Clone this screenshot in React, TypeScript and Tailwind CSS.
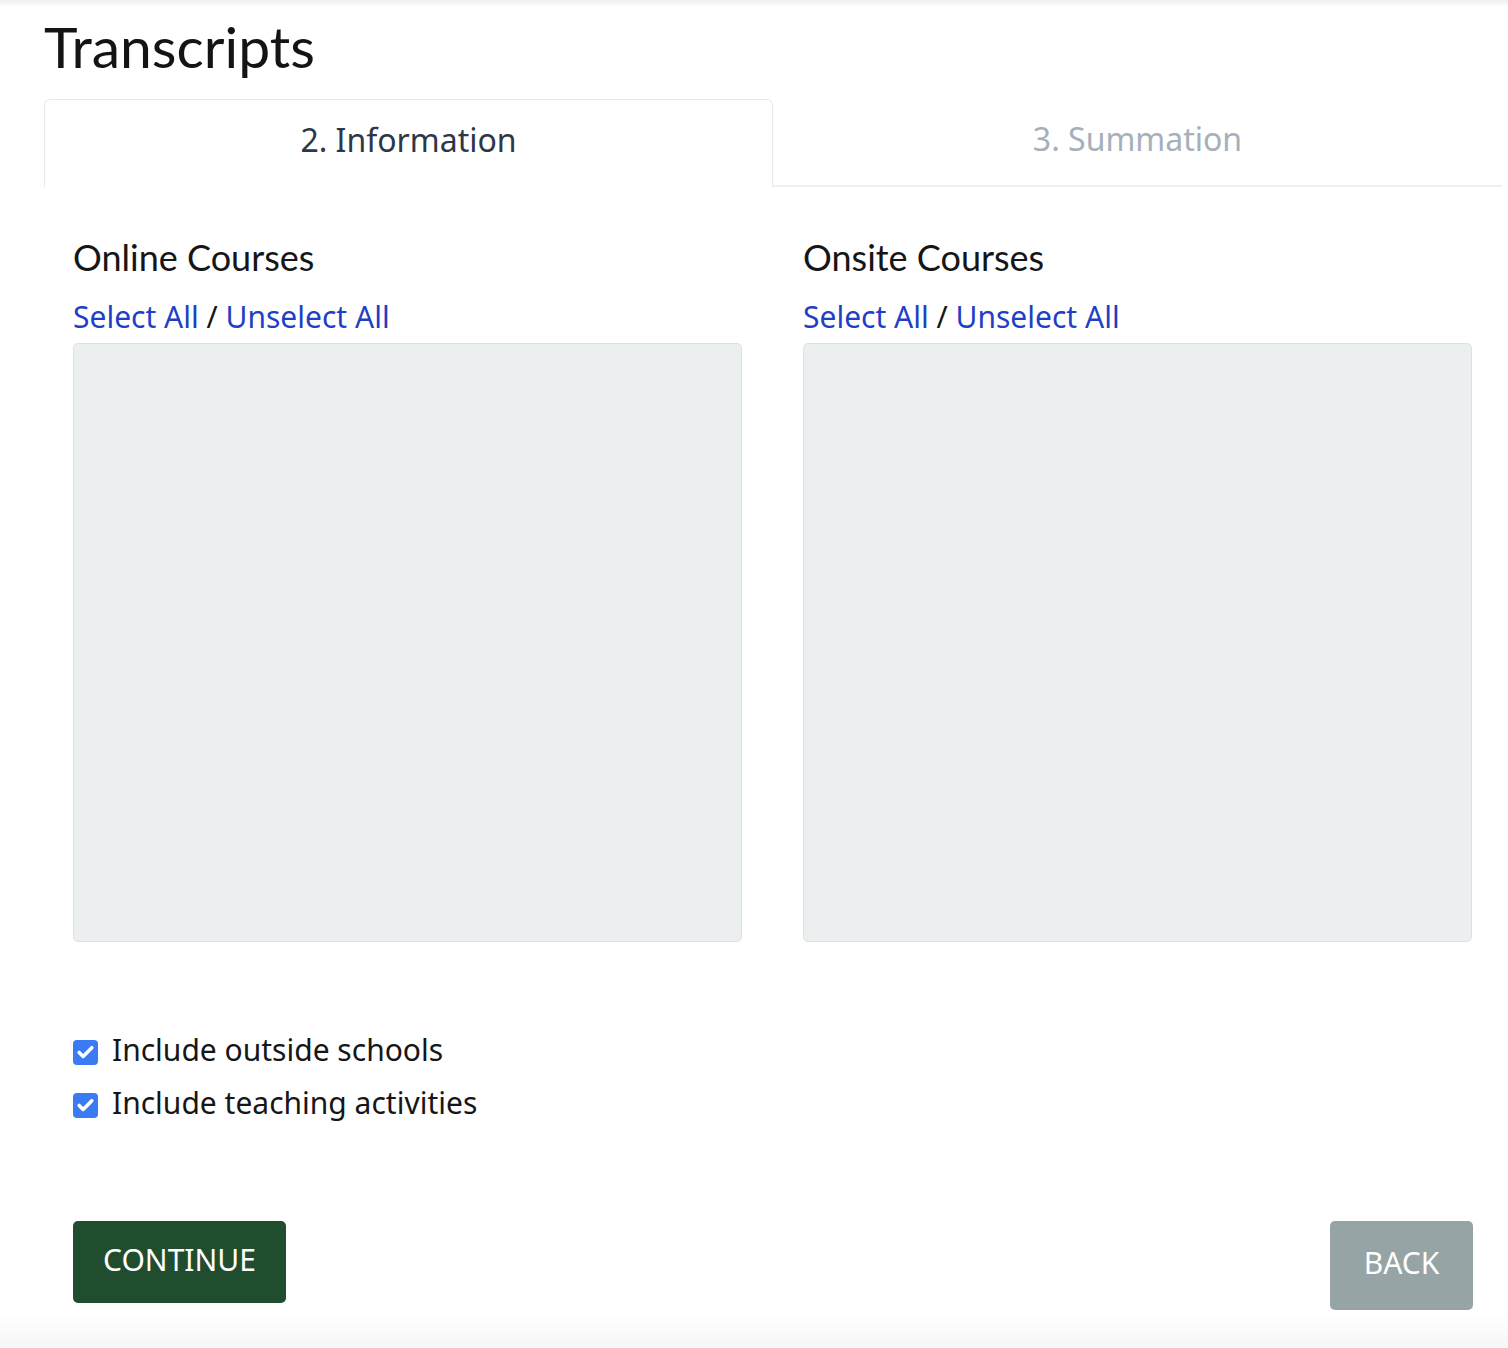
import { Check } from 'lucide-react';

const SECTIONS = ['Online Courses', 'Onsite Courses'];

const OPTIONS = ['Include outside schools', 'Include teaching activities'];

function CourseColumn({ title }: { title: string }) {
  return (
    <div>
      <h2 className="font-['Lato',sans-serif] text-[36px] leading-[44px] text-[#161616]">{title}</h2>
      <p className="mt-[18px] text-[30px] leading-[40px] text-[#161616]">
        <a href="#" className="text-[#1f3fc6]">
          Select All
        </a>{' '}
        /{' '}
        <a href="#" className="text-[#1f3fc6]">
          Unselect All
        </a>
      </p>
      <div className="mt-[6px] h-[599px] rounded-[5px] border border-[#dde1e2] bg-[#eceff0]" />
    </div>
  );
}

export default function App() {
  return (
    <div className="min-h-[1348px] bg-[linear-gradient(to_bottom,#efefef_0px,#ffffff_7px,#ffffff_1312px,#f6f6f6_1348px)] font-['Noto_Sans',sans-serif]">
      <div className="pl-[44px] pr-[6px] pt-[12px]">
        <h1 className="font-['Lato',sans-serif] text-[57px] leading-[68px] text-[#141414]">Transcripts</h1>
        <div className="mt-[19px] flex">
          <div className="flex h-[88px] w-[729px] items-center justify-center rounded-t-[6px] border border-b-0 border-[#e6eaeb] pb-[8px] text-[32px] text-[#2d3748]">
            2. Information
          </div>
          <div className="flex h-[88px] flex-1 items-center justify-center border-b-2 border-[#eef1f2] pb-[6px] text-[32px] text-[#a5b0bb]">
            3. Summation
          </div>
        </div>
      </div>

      <div className="pl-[73px] pr-[35px] pt-[48px]">
        <div className="grid grid-cols-[669px_669px] gap-[61px]">
          {SECTIONS.map((s) => (
            <CourseColumn key={s} title={s} />
          ))}
        </div>

        <div className="mt-[81px]">
          {OPTIONS.map((o) => (
            <label key={o} className="flex h-[53px] items-center gap-[14px] text-[30px] text-[#161616]">
              <span className="mt-[5px] flex h-[25px] w-[25px] items-center justify-center rounded-[4px] bg-[#3a7af3]">
                <Check className="h-[19px] w-[19px] text-white" strokeWidth={4.5} />
              </span>
              {o}
            </label>
          ))}
        </div>

        <div className="mt-[92px] flex items-start justify-between">
          <button className="flex h-[82px] w-[213px] items-center justify-center rounded-[5px] bg-[#214d2f] pb-[6px] text-[30px] text-white">
            CONTINUE
          </button>
          <button className="flex h-[89px] w-[143px] items-center justify-center rounded-[5px] bg-[#97a4a5] pb-[6px] text-[30px] text-white">
            BACK
          </button>
        </div>
      </div>
    </div>
  );
}
